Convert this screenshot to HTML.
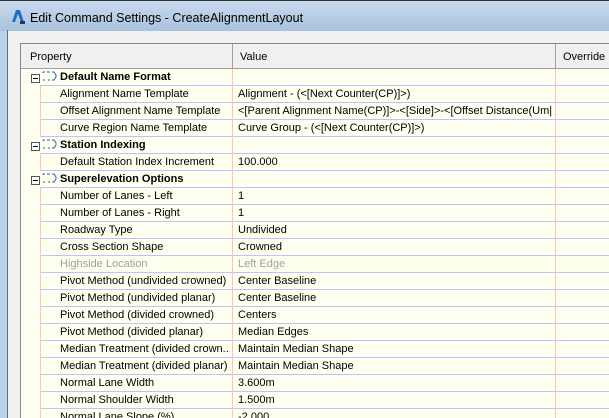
<!DOCTYPE html>
<html><head><style>
*{margin:0;padding:0;box-sizing:border-box}
html,body{width:609px;height:418px;overflow:hidden}
body{background:#f0f0f0;position:relative;font-family:"Liberation Sans",sans-serif;font-size:11px;color:#000}
.a{position:absolute}
.t{position:absolute;white-space:nowrap;line-height:17px;overflow:hidden}
</style></head><body>
<div class="a" style="left:0;top:0;width:609px;height:31px;background:linear-gradient(#c9daee,#a9c2de);border-top:1px solid #333"></div>
<div class="a" style="left:0;top:31px;width:7px;height:387px;background:#b9d1ea"></div>
<div class="a" style="left:7px;top:30px;width:1px;height:388px;background:#6d6d6d"></div>
<svg class="a" style="left:10px;top:9px" width="16" height="16"><path d="M6 1 L10 1 L14 13 L11 13 L8 5 L5 13 L2 13 Z" fill="#1e6fc8"/><rect x="10" y="12" width="5" height="3" fill="#1e3a60"/></svg>
<div class="t" style="left:30px;top:10px;font-size:12.5px;color:#000">Edit Command Settings - CreateAlignmentLayout</div>
<div class="a" style="left:20px;top:43px;width:590px;height:376px;border:1px solid #828790;background:#fffff0"></div>
<div class="a" style="left:21px;top:44px;width:588px;height:25px;background:#f0f0f0;border-bottom:1px solid #a0a0a0"></div>
<div class="a" style="left:232px;top:44px;width:1px;height:24px;background:#a0a0a0"></div>
<div class="a" style="left:555px;top:44px;width:1px;height:24px;background:#a0a0a0"></div>
<div class="t" style="left:30px;top:49px">Property</div>
<div class="t" style="left:240px;top:49px">Value</div>
<div class="t" style="left:563px;top:49px">Override</div>
<div id="g"></div>
<script>
var rows=[
['g','Default Name Format',''],
['d','Alignment Name Template','Alignment - (<[Next Counter(CP)]>)'],
['d','Offset Alignment Name Template','<[Parent Alignment Name(CP)]>-<[Side]>-<[Offset Distance(Um|...'],
['d','Curve Region Name Template','Curve Group - (<[Next Counter(CP)]>)'],
['g','Station Indexing',''],
['d','Default Station Index Increment','100.000'],
['g','Superelevation Options',''],
['d','Number of Lanes - Left','1'],
['d','Number of Lanes - Right','1'],
['d','Roadway Type','Undivided'],
['d','Cross Section Shape','Crowned'],
['x','Highside Location','Left Edge'],
['d','Pivot Method (undivided crowned)','Center Baseline'],
['d','Pivot Method (undivided planar)','Center Baseline'],
['d','Pivot Method (divided crowned)','Centers'],
['d','Pivot Method (divided planar)','Median Edges'],
['d','Median Treatment (divided crown...','Maintain Median Shape'],
['d','Median Treatment (divided planar)','Maintain Median Shape'],
['d','Normal Lane Width','3.600m'],
['d','Normal Shoulder Width','1.500m'],
['d','Normal Lane Slope (%)','-2.000']];
var h='',y=69;
function esc(s){return s.replace(/&/g,'&amp;').replace(/</g,'&lt;').replace(/>/g,'&gt;')}
rows.forEach(function(r){
 h+='<div class="a" style="left:40px;top:'+(y+16)+'px;width:569px;height:1px;background:#c0c0ff"></div>';
 h+='<div class="a" style="left:232px;top:'+y+'px;width:1px;height:17px;background:#ffc0c0"></div>';
 h+='<div class="a" style="left:555px;top:'+y+'px;width:1px;height:17px;background:#ffc0c0"></div>';
 if(r[0]=='g'){
  h+='<div class="a" style="left:31px;top:'+(y+5)+'px;width:9px;height:9px;border:1px solid #555;background:#fff"></div><div class="a" style="left:33px;top:'+(y+9)+'px;width:5px;height:1px;background:#000"></div>';
  h+='<svg class="a" style="left:42px;top:'+(y+2)+'px" width="15" height="11"><path d="M1 1h2M5 1h3M10 1h2l2 3v2l-2 3h-2M8 9h-2M3 9h-2M1 1v1" stroke="#2060c0" fill="none" stroke-width="1"/></svg>';
  h+='<div class="t" style="left:60px;top:'+y+'px;font-weight:bold">'+esc(r[1])+'</div>';
 } else {
  h+='<div class="a" style="left:40px;top:'+y+'px;width:1px;height:17px;background:#ffc0c0"></div>';
  var c=r[0]=='x'?'#a0a0a0':'#000';
  h+='<div class="t" style="left:60px;top:'+y+'px;width:170px;color:'+c+'">'+esc(r[1])+'</div>';
  h+='<div class="t" style="left:238px;top:'+y+'px;width:315px;color:'+c+'">'+esc(r[2])+'</div>';
 }
 y+=17;
});
document.getElementById('g').innerHTML=h;
</script>
</body></html>
